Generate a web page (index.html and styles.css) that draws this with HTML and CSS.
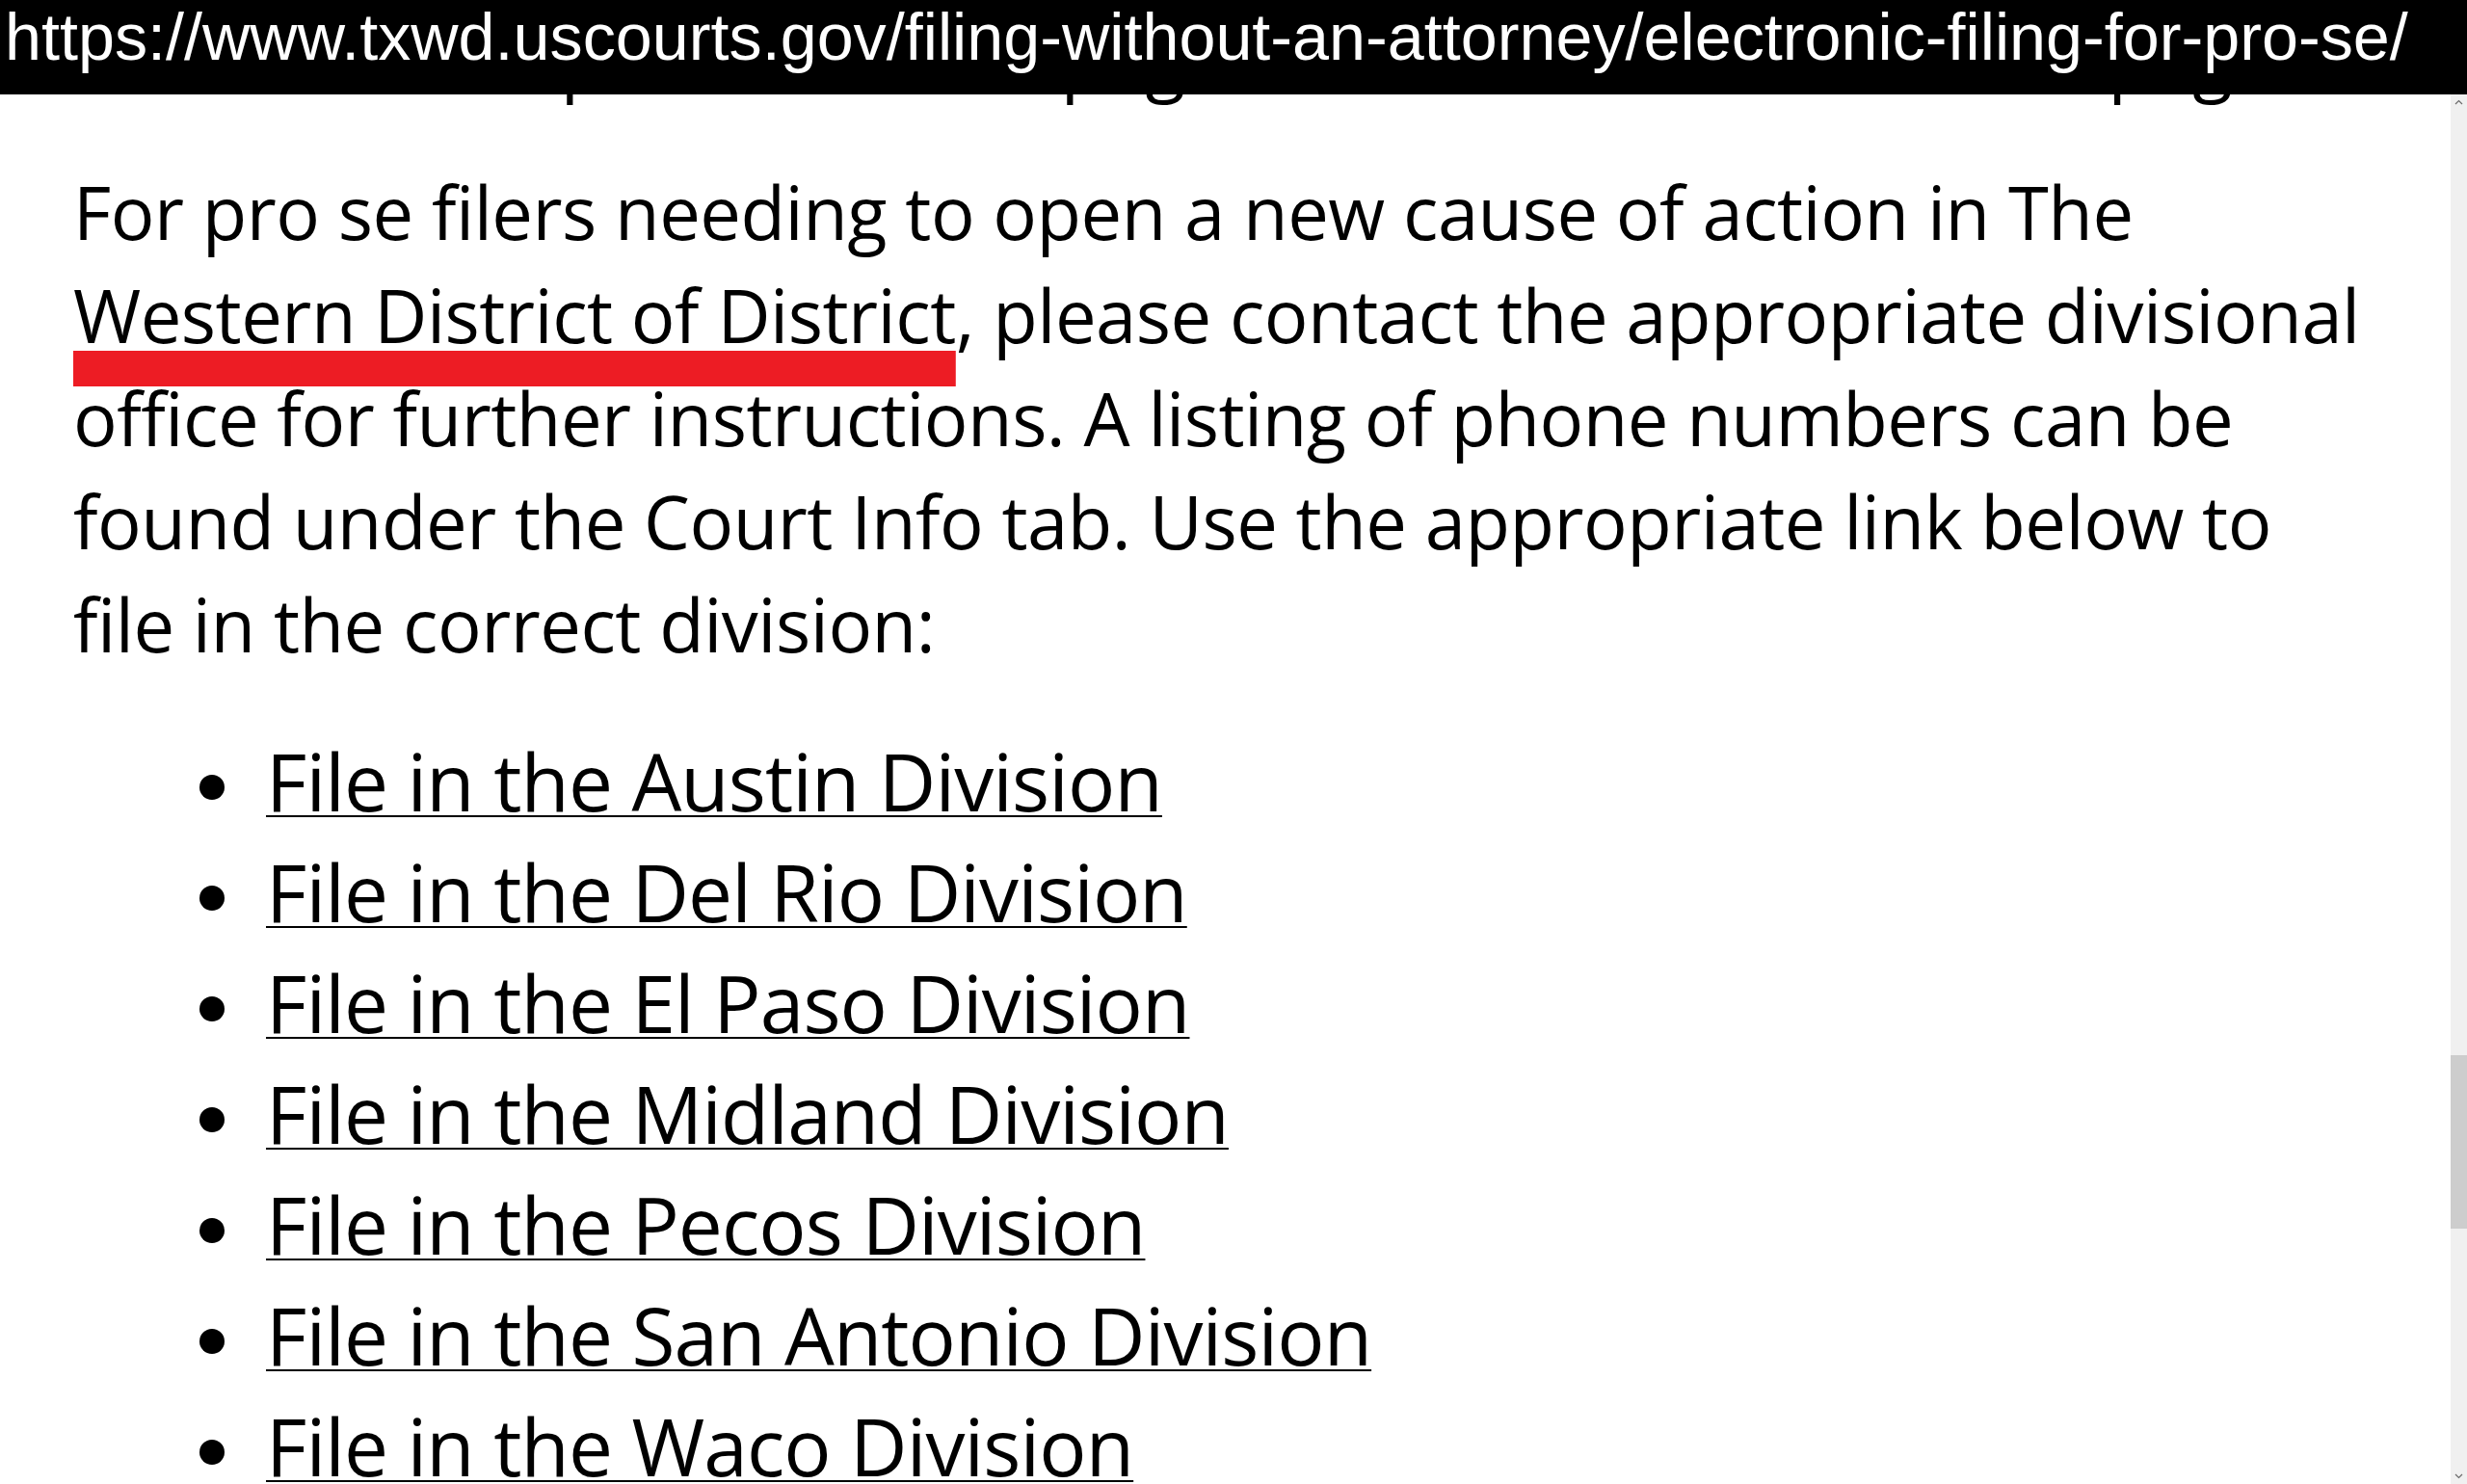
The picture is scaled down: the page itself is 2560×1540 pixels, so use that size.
FILE: index.html
```html
<!DOCTYPE html>
<html lang="en">
<head>
<meta charset="utf-8">
<title>Electronic Filing for Pro Se</title>
<link rel="stylesheet" href="styles.css">
</head>
<body>
<header class="urlbar">https://www.txwd.uscourts.gov/filing-without-an-attorney/electronic-filing-for-pro-se/</header>
<div class="page">
  <main class="content">
    <p class="para">Review the help menu in this page. Forms are located at our page.</p>
    <p class="para">For pro se filers needing to open a new cause of action in The <span class="annot">Western District of District</span>, please contact the appropriate divisional office for further instructions. A listing of phone numbers can be found under the Court Info tab. Use the appropriate link below to file in the correct division:</p>
    <ul class="divisions">
      <li><a href="#">File in the Austin Division</a></li>
      <li><a href="#">File in the Del Rio Division</a></li>
      <li><a href="#">File in the El Paso Division</a></li>
      <li><a href="#">File in the Midland Division</a></li>
      <li><a href="#">File in the Pecos Division</a></li>
      <li><a href="#">File in the San Antonio Division</a></li>
      <li><a href="#">File in the Waco Division</a></li>
    </ul>
  </main>
  <aside class="scrollbar">
    <div class="sb-btn">
      <svg width="17" height="17" viewBox="0 0 17 17"><path d="M5 10 L8.5 6.5 L12 10" fill="none" stroke="#6b6b6b" stroke-width="1.2"/></svg>
    </div>
    <div class="sb-track"><div class="sb-thumb"></div></div>
    <div class="sb-btn">
      <svg width="17" height="17" viewBox="0 0 17 17"><path d="M5 7 L8.5 10.5 L12 7" fill="none" stroke="#6b6b6b" stroke-width="1.2"/></svg>
    </div>
  </aside>
</div>
</body>
</html>
```

FILE: styles.css
```css
html, body {
  margin: 0;
  padding: 0;
  height: 1540px;
  overflow: hidden;
  background: #ffffff;
}

.urlbar {
  position: fixed;
  top: 0;
  left: 0;
  right: 0;
  height: 98px;
  z-index: 10;
  background: #000000;
  color: #ffffff;
  font-family: "Liberation Sans", Arial, sans-serif;
  font-size: 68.3px;
  line-height: 76px;
  padding-left: 5px;
  white-space: nowrap;
  box-sizing: border-box;
}

.page {
  display: flex;
  height: 1540px;
  overflow: hidden;
}

.content {
  flex: 1;
  min-width: 0;
  padding: 8px 0 0 76px;
  color: #000000;
  font-family: "Open Sans", "Noto Sans", sans-serif;
}

.para {
  margin: 0 0 51px 0;
  max-width: 2385px;
  font-size: 76px;
  line-height: 107px;
  letter-spacing: -0.5px;
}

.annot {
  text-decoration-line: underline;
  text-decoration-color: #ed1c24;
  text-decoration-thickness: 37px;
  text-underline-offset: 8px;
  text-decoration-skip-ink: none;
}

.divisions {
  margin: 52px 0 0 0;
  padding: 0 0 0 131px;
  list-style: none;
  font-size: 82px;
  line-height: 115px;
  letter-spacing: -0.9px;
}

.divisions li {
  white-space: nowrap;
}

.divisions li::before {
  content: "";
  display: inline-block;
  width: 26px;
  height: 26px;
  border-radius: 50%;
  background: #000000;
  margin-right: 43px;
  vertical-align: 12px;
}

.divisions a {
  color: #000000;
  text-decoration-line: underline;
  text-decoration-thickness: 2px;
  text-underline-offset: 4px;
}

.scrollbar {
  flex: 0 0 17px;
  width: 17px;
  margin-top: 98px;
  background: #f0f0f0;
  display: grid;
  grid-template-rows: 17px 1fr 17px;
}

.sb-btn {
  display: flex;
  align-items: center;
  justify-content: center;
}

.sb-track {
  overflow: hidden;
}

.sb-thumb {
  margin-top: 980px;
  height: 180px;
  background: #cdcdcd;
}
```
